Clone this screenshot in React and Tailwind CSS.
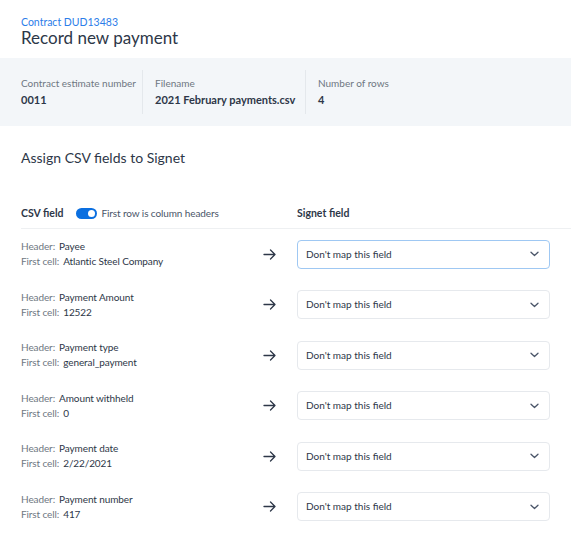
import React from "react";

const rows = [
  { header: "Payee", cell: "Atlantic Steel Company", focus: true },
  { header: "Payment Amount", cell: "12522" },
  { header: "Payment type", cell: "general_payment" },
  { header: "Amount withheld", cell: "0" },
  { header: "Payment date", cell: "2/22/2021" },
  { header: "Payment number", cell: "417" },
];

function Arrow() {
  return (
    <svg width="13" height="11" viewBox="0 0 13 11" fill="none" stroke="#2d3748" strokeWidth="1.3" strokeLinecap="round" strokeLinejoin="round">
      <path d="M1 5.5h11M7.5 1l4.5 4.5L7.5 10" />
    </svg>
  );
}

function Chevron() {
  return (
    <svg width="9" height="6" viewBox="0 0 9 6" fill="none" stroke="#4a5568" strokeWidth="1.3" strokeLinecap="round" strokeLinejoin="round">
      <path d="M1 1.2l3.5 3.3L8 1.2" />
    </svg>
  );
}

export default function App() {
  return (
    <div className="w-full min-h-[533px] bg-white text-[#2d3748] whitespace-nowrap" style={{ fontFamily: 'Lato, "Noto Sans", sans-serif' }}>
      <div className="px-[21px] pt-[15px] pb-[11px]">
        <div className="text-[10.5px] leading-[14px] text-[#2b7de9]">Contract DUD13483</div>
        <div className="text-[17px] leading-[18px] text-[#2d3748]">Record new payment</div>
      </div>
      <div className="bg-[#f3f6f9] h-[68px] flex items-center">
        <div className="pl-[21px] w-[143px] h-[44px] flex flex-col justify-center border-r border-[#e4e8ec]">
          <div className="text-[10px] leading-[15px] text-[#6e7781]">Contract estimate number</div>
          <div className="text-[11px] leading-[17px] font-bold text-[#2d3748]">0011</div>
        </div>
        <div className="pl-[12px] w-[163px] h-[44px] flex flex-col justify-center border-r border-[#e4e8ec]">
          <div className="text-[10px] leading-[15px] text-[#6e7781]">Filename</div>
          <div className="text-[11px] leading-[17px] font-bold text-[#2d3748]">2021 February payments.csv</div>
        </div>
        <div className="pl-[12px] h-[44px] flex flex-col justify-center">
          <div className="text-[10px] leading-[15px] text-[#6e7781]">Number of rows</div>
          <div className="text-[11px] leading-[17px] font-bold text-[#2d3748]">4</div>
        </div>
      </div>
      <div className="px-[21px] pt-[22px] text-[14px] leading-[20px] text-[#2d3748]">Assign CSV fields to Signet</div>
      <div className="ml-[21px] mt-[31px] flex items-center h-[30px] border-b border-[#eef0f2]">
        <div className="flex-1 flex items-center">
          <span className="text-[10.5px] font-bold text-[#2d3748]">CSV field</span>
          <span className="ml-[12px] w-[21px] h-[11px] rounded-full bg-[#0b6fe0] flex items-center justify-end pr-[2px]">
            <span className="w-[7px] h-[7px] rounded-full bg-white" />
          </span>
          <span className="ml-[5px] text-[10px] tracking-[-0.1px] text-[#4a5568]">First row is column headers</span>
        </div>
        <div className="w-[274px] text-[10.5px] font-bold text-[#2d3748]">Signet field</div>
      </div>
      <div>
        {rows.map((r, i) => (
          <div key={i} className="flex items-center h-[50.5px] pl-[21px] pr-[21px]">
            <div className="flex-1 flex flex-col text-[10px] leading-[15px] tracking-[-0.1px]">
              <div>
                <span className="text-[#6e7781]">Header:</span>
                <span className="ml-[4px] text-[#2d3748]">{r.header}</span>
              </div>
              <div>
                <span className="text-[#6e7781]">First cell:</span>
                <span className="ml-[4px] text-[#2d3748]">{r.cell}</span>
              </div>
            </div>
            <div className="w-[34px] flex items-center">
              <Arrow />
            </div>
            <div
              className={
                "w-[253px] h-[29px] rounded-[4px] border flex items-center justify-between pl-[8px] pr-[10px] bg-white " +
                (r.focus ? "border-[#9fc8f3]" : "border-[#e6e9ed]")
              }
            >
              <span className="text-[10px] text-[#2d3748]">Don't map this field</span>
              <Chevron />
            </div>
          </div>
        ))}
      </div>
    </div>
  );
}
